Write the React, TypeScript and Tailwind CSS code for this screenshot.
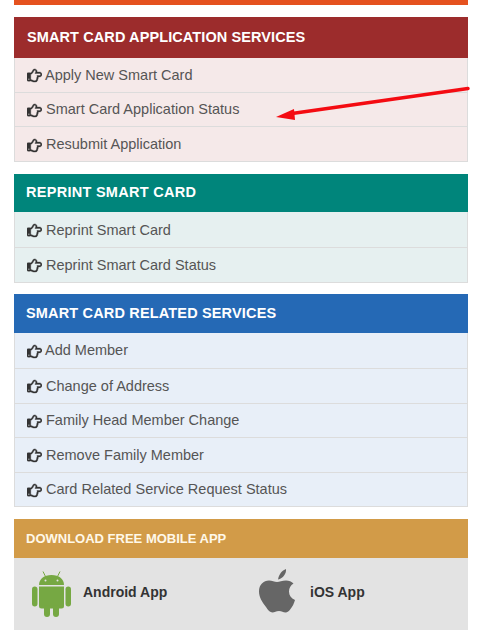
import React from 'react';
import { FaRegHandPointRight } from 'react-icons/fa';

type Section = {
  title: string;
  wrapClass: string;
  headerClass: string;
  bodyClass: string;
  items: { label: string; rowClass: string; gapClass?: string }[];
};

const sections: Section[] = [
  {
    title: 'SMART CARD APPLICATION SERVICES',
    wrapClass: 'mb-[12px]',
    headerClass: 'h-[41px] bg-[#9c2c2c] pl-[13px] text-[14.5px] tracking-[0.1px]',
    bodyClass: 'bg-[#f5e9e9]',
    items: [
      { label: 'Apply New Smart Card', rowClass: 'h-[34px] pt-[1px]', gapClass: 'gap-[3px]' },
      { label: 'Smart Card Application Status', rowClass: 'h-[34px] pt-[1px]' },
      { label: 'Resubmit Application', rowClass: 'h-[35px] pt-[2px]' },
    ],
  },
  {
    title: 'REPRINT SMART CARD',
    wrapClass: 'mb-[11px]',
    headerClass: 'h-[38px] bg-[#00857b] pl-[12px] text-[14.5px] tracking-[0.28px]',
    bodyClass: 'bg-[#e6f0f0]',
    items: [
      { label: 'Reprint Smart Card', rowClass: 'h-[35px] pt-[2px]' },
      { label: 'Reprint Smart Card Status', rowClass: 'h-[35px] pt-[1px]' },
    ],
  },
  {
    title: 'SMART CARD RELATED SERVICES',
    wrapClass: 'mb-[12px]',
    headerClass: 'h-[39px] bg-[#2569b5] pl-[12px] text-[14.5px] tracking-[0.16px]',
    bodyClass: 'bg-[#e8eff8]',
    items: [
      { label: 'Add Member', rowClass: 'h-[35px] pt-[1px]', gapClass: 'gap-[3px]' },
      { label: 'Change of Address', rowClass: 'h-[35px] pt-[1px]' },
      { label: 'Family Head Member Change', rowClass: 'h-[34px] pt-[1px]' },
      { label: 'Remove Family Member', rowClass: 'h-[35px] pt-[1px]' },
      { label: 'Card Related Service Request Status', rowClass: 'h-[34px] pt-[1px]' },
    ],
  },
];

const AndroidIcon = () => (
  <svg width="39" height="46" viewBox="0 0 39 46" fill="#76a843" aria-hidden="true">
    <path d="M11 0.500l2.500 5M28 0.500l-2.500 5" stroke="#76a843" strokeWidth="1" fill="none" />
    <path d="M7 14C7 8 12 4 19.500 4S32 8 32 14z" />
    <circle cx="13.500" cy="9.500" r="1" fill="#e3e3e3" />
    <circle cx="25.500" cy="9.500" r="1" fill="#e3e3e3" />
    <path d="M7 15.500h25V35a2.500 2.500 0 0 1-2.500 2.500h-20A2.500 2.500 0 0 1 7 35z" />
    <rect x="0" y="15.500" width="5.500" height="20" rx="2.750" />
    <rect x="33.500" y="15.500" width="5.500" height="20" rx="2.750" />
    <rect x="12" y="34" width="6" height="12" rx="3" />
    <rect x="21" y="34" width="6" height="12" rx="3" />
  </svg>
);

const AppleIcon = () => (
  <svg width="37" height="44" viewBox="0 0 37 44" fill="#666666" aria-hidden="true">
    <path d="M19 10.500C20 5 23 1.500 27 0c.5 4.500-3 9.500-8 10.500z" />
    <path d="M10 11.500c3 0 5.500 1.500 8 1.500s5-1.500 9-1.500c3 0 5.500 1 7.500 3-3 2-4.500 4.500-4.500 8 0 4 2 6.500 6 8.500-1 3.500-2.500 6.500-4.500 9-1.500 2-3 3.500-5 3.500-2.500 0-3.500-1.500-6.500-1.500s-4.500 1.500-6.500 1.500c-2.500 0-4.500-2.500-6.500-5.500C3 33 0 28 0 22.500 0 15.500 4.500 11.500 10 11.500z" />
  </svg>
);

const Arrow = () => (
  <svg
    className="absolute left-[276px] top-[86px]"
    width="196"
    height="36"
    viewBox="0 0 196 36"
    aria-hidden="true"
  >
    <path d="M192 2.500L16 27.500" stroke="#f40b12" strokeWidth="3.500" strokeLinecap="round" fill="none" />
    <path d="M0 31L18 23L19 34z" fill="#f40b12" />
  </svg>
);

const App: React.FC = () => (
  <div className="relative h-[637px] w-[491px] overflow-hidden bg-white font-['Liberation_Sans',Arial,sans-serif]">
    <div className="ml-[14px] flex w-[454px] flex-col">
      <div className="mb-[12px] h-[5px] bg-[#e5521f]" />

      {sections.map((section) => (
        <div key={section.title} className={section.wrapClass}>
          <div className={`flex items-center font-bold text-white ${section.headerClass}`}>{section.title}</div>
          <ul className={`border-x border-b border-[#dcdcdc] ${section.bodyClass}`}>
            {section.items.map((item, i) => (
              <li
                key={item.label}
                className={`flex items-center pl-[12px] text-[14.5px] text-[#555555] ${item.rowClass} ${
                  item.gapClass ?? 'gap-[4px]'
                } ${i > 0 ? 'border-t border-[#dcdcdc]' : ''}`}
              >
                <FaRegHandPointRight className="size-[15px] shrink-0 stroke-[12px] text-[#333333]" />
                <span>{item.label}</span>
              </li>
            ))}
          </ul>
        </div>
      ))}

      <div>
        <div className="flex h-[39px] items-center bg-[#d29b48] pl-[12px] text-[13px] font-bold text-[#fff8e8]">
          DOWNLOAD FREE MOBILE APP
        </div>
        <div className="flex h-[72px] items-center bg-[#e3e3e3] pl-[18px]">
          <div className="flex w-[227px] items-center gap-[12px]">
            <AndroidIcon />
            <span className="mb-[4px] text-[14px] font-bold text-[#333333]">Android App</span>
          </div>
          <div className="flex items-center gap-[14px]">
            <div className="mb-[6px]">
              <AppleIcon />
            </div>
            <span className="mb-[4px] text-[14px] font-bold text-[#333333]">iOS App</span>
          </div>
        </div>
      </div>
    </div>
    <Arrow />
  </div>
);

export default App;
